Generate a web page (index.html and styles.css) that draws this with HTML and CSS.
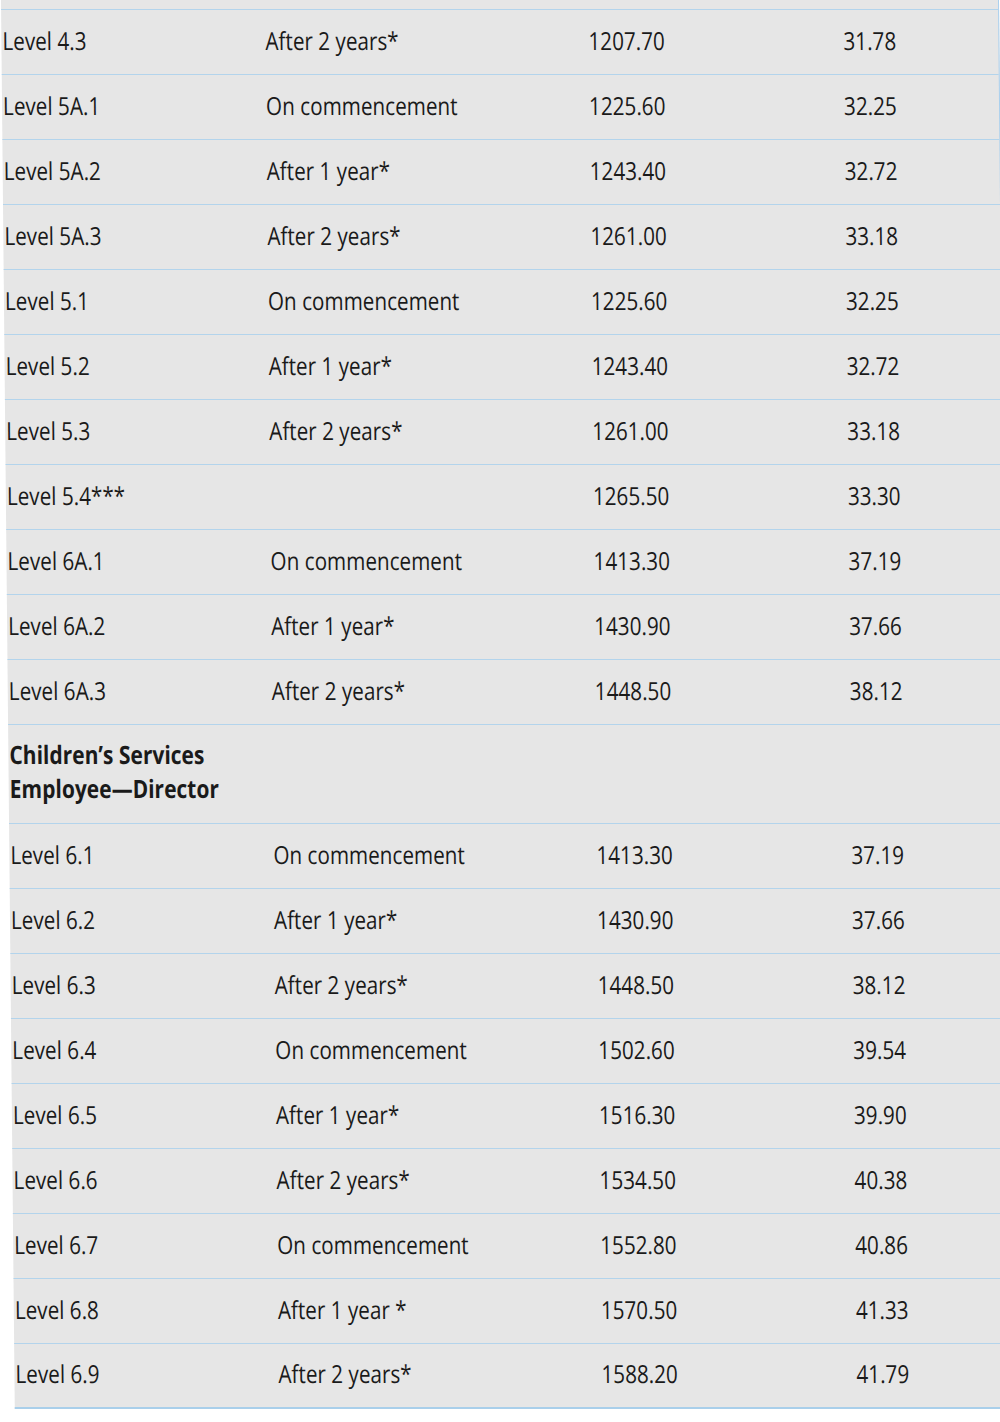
FILE: index.html
```html
<!DOCTYPE html>
<html lang="en">
<head>
<meta charset="utf-8">
<title>Pay rates</title>
<link rel="stylesheet" href="styles.css">
</head>
<body>
<div class="sheet">
  <div class="row spacer"></div>
  <div class="row"><div class="c"><span class="t">Level 4.3</span></div><div class="c"><span class="t">After 2 years*</span></div><div class="c"><span class="t">1207.70</span></div><div class="c"><span class="t">31.78</span></div></div>
  <div class="row"><div class="c"><span class="t">Level 5A.1</span></div><div class="c"><span class="t">On commencement</span></div><div class="c"><span class="t">1225.60</span></div><div class="c"><span class="t">32.25</span></div></div>
  <div class="row"><div class="c"><span class="t">Level 5A.2</span></div><div class="c"><span class="t">After 1 year*</span></div><div class="c"><span class="t">1243.40</span></div><div class="c"><span class="t">32.72</span></div></div>
  <div class="row"><div class="c"><span class="t">Level 5A.3</span></div><div class="c"><span class="t">After 2 years*</span></div><div class="c"><span class="t">1261.00</span></div><div class="c"><span class="t">33.18</span></div></div>
  <div class="row"><div class="c"><span class="t">Level 5.1</span></div><div class="c"><span class="t">On commencement</span></div><div class="c"><span class="t">1225.60</span></div><div class="c"><span class="t">32.25</span></div></div>
  <div class="row"><div class="c"><span class="t">Level 5.2</span></div><div class="c"><span class="t">After 1 year*</span></div><div class="c"><span class="t">1243.40</span></div><div class="c"><span class="t">32.72</span></div></div>
  <div class="row"><div class="c"><span class="t">Level 5.3</span></div><div class="c"><span class="t">After 2 years*</span></div><div class="c"><span class="t">1261.00</span></div><div class="c"><span class="t">33.18</span></div></div>
  <div class="row"><div class="c"><span class="t">Level 5.4***</span></div><div class="c"></div><div class="c"><span class="t">1265.50</span></div><div class="c"><span class="t">33.30</span></div></div>
  <div class="row"><div class="c"><span class="t">Level 6A.1</span></div><div class="c"><span class="t">On commencement</span></div><div class="c"><span class="t">1413.30</span></div><div class="c"><span class="t">37.19</span></div></div>
  <div class="row"><div class="c"><span class="t">Level 6A.2</span></div><div class="c"><span class="t">After 1 year*</span></div><div class="c"><span class="t">1430.90</span></div><div class="c"><span class="t">37.66</span></div></div>
  <div class="row"><div class="c"><span class="t">Level 6A.3</span></div><div class="c"><span class="t">After 2 years*</span></div><div class="c"><span class="t">1448.50</span></div><div class="c"><span class="t">38.12</span></div></div>
  <div class="row heading"><div class="c"><span class="t head">Children’s Services<br>Employee—Director</span></div></div>
  <div class="row"><div class="c"><span class="t">Level 6.1</span></div><div class="c"><span class="t">On commencement</span></div><div class="c"><span class="t">1413.30</span></div><div class="c"><span class="t">37.19</span></div></div>
  <div class="row"><div class="c"><span class="t">Level 6.2</span></div><div class="c"><span class="t">After 1 year*</span></div><div class="c"><span class="t">1430.90</span></div><div class="c"><span class="t">37.66</span></div></div>
  <div class="row"><div class="c"><span class="t">Level 6.3</span></div><div class="c"><span class="t">After 2 years*</span></div><div class="c"><span class="t">1448.50</span></div><div class="c"><span class="t">38.12</span></div></div>
  <div class="row"><div class="c"><span class="t">Level 6.4</span></div><div class="c"><span class="t">On commencement</span></div><div class="c"><span class="t">1502.60</span></div><div class="c"><span class="t">39.54</span></div></div>
  <div class="row"><div class="c"><span class="t">Level 6.5</span></div><div class="c"><span class="t">After 1 year*</span></div><div class="c"><span class="t">1516.30</span></div><div class="c"><span class="t">39.90</span></div></div>
  <div class="row"><div class="c"><span class="t">Level 6.6</span></div><div class="c"><span class="t">After 2 years*</span></div><div class="c"><span class="t">1534.50</span></div><div class="c"><span class="t">40.38</span></div></div>
  <div class="row"><div class="c"><span class="t">Level 6.7</span></div><div class="c"><span class="t">On commencement</span></div><div class="c"><span class="t">1552.80</span></div><div class="c"><span class="t">40.86</span></div></div>
  <div class="row"><div class="c"><span class="t">Level 6.8</span></div><div class="c"><span class="t">After 1 year *</span></div><div class="c"><span class="t">1570.50</span></div><div class="c"><span class="t">41.33</span></div></div>
  <div class="row"><div class="c"><span class="t">Level 6.9</span></div><div class="c"><span class="t">After 2 years*</span></div><div class="c"><span class="t">1588.20</span></div><div class="c"><span class="t">41.79</span></div></div>
</div>
</body>
</html>
```
FILE: styles.css
```css
html, body {
  margin: 0;
  padding: 0;
  background: #ffffff;
}

body {
  font-family: "Open Sans", "Noto Sans", "Liberation Sans", sans-serif;
  color: #1a1a1a;
  overflow: hidden;
}

.sheet {
  width: 997px;
  margin-left: 1px;
  background: #e6e6e6;
  border-right: 1px solid #a9d0ee;
  transform: skewX(0.56deg);
  transform-origin: 0 0;
}

.row {
  display: grid;
  grid-template-columns: 263px 323px 255px 1fr;
  align-items: center;
  height: 65px;
  box-sizing: border-box;
  border-bottom: 1px solid #b3d4ec;
}

.row.spacer {
  height: 10px;
}

.row.heading {
  height: 99px;
  grid-template-columns: 1fr;
}

.row:last-child {
  border-bottom: 2px solid #a9cfea;
}

.c {
  padding-left: 1px;
  white-space: nowrap;
}

.t {
  display: inline-block;
  font-size: 20.7px;
  line-height: 24px;
  transform: translateY(-2px) scaleY(1.2);
  transform-origin: 50% 50%;
}

.t.head {
  font-weight: 700;
  font-size: 21px;
  line-height: 29px;
}
```
